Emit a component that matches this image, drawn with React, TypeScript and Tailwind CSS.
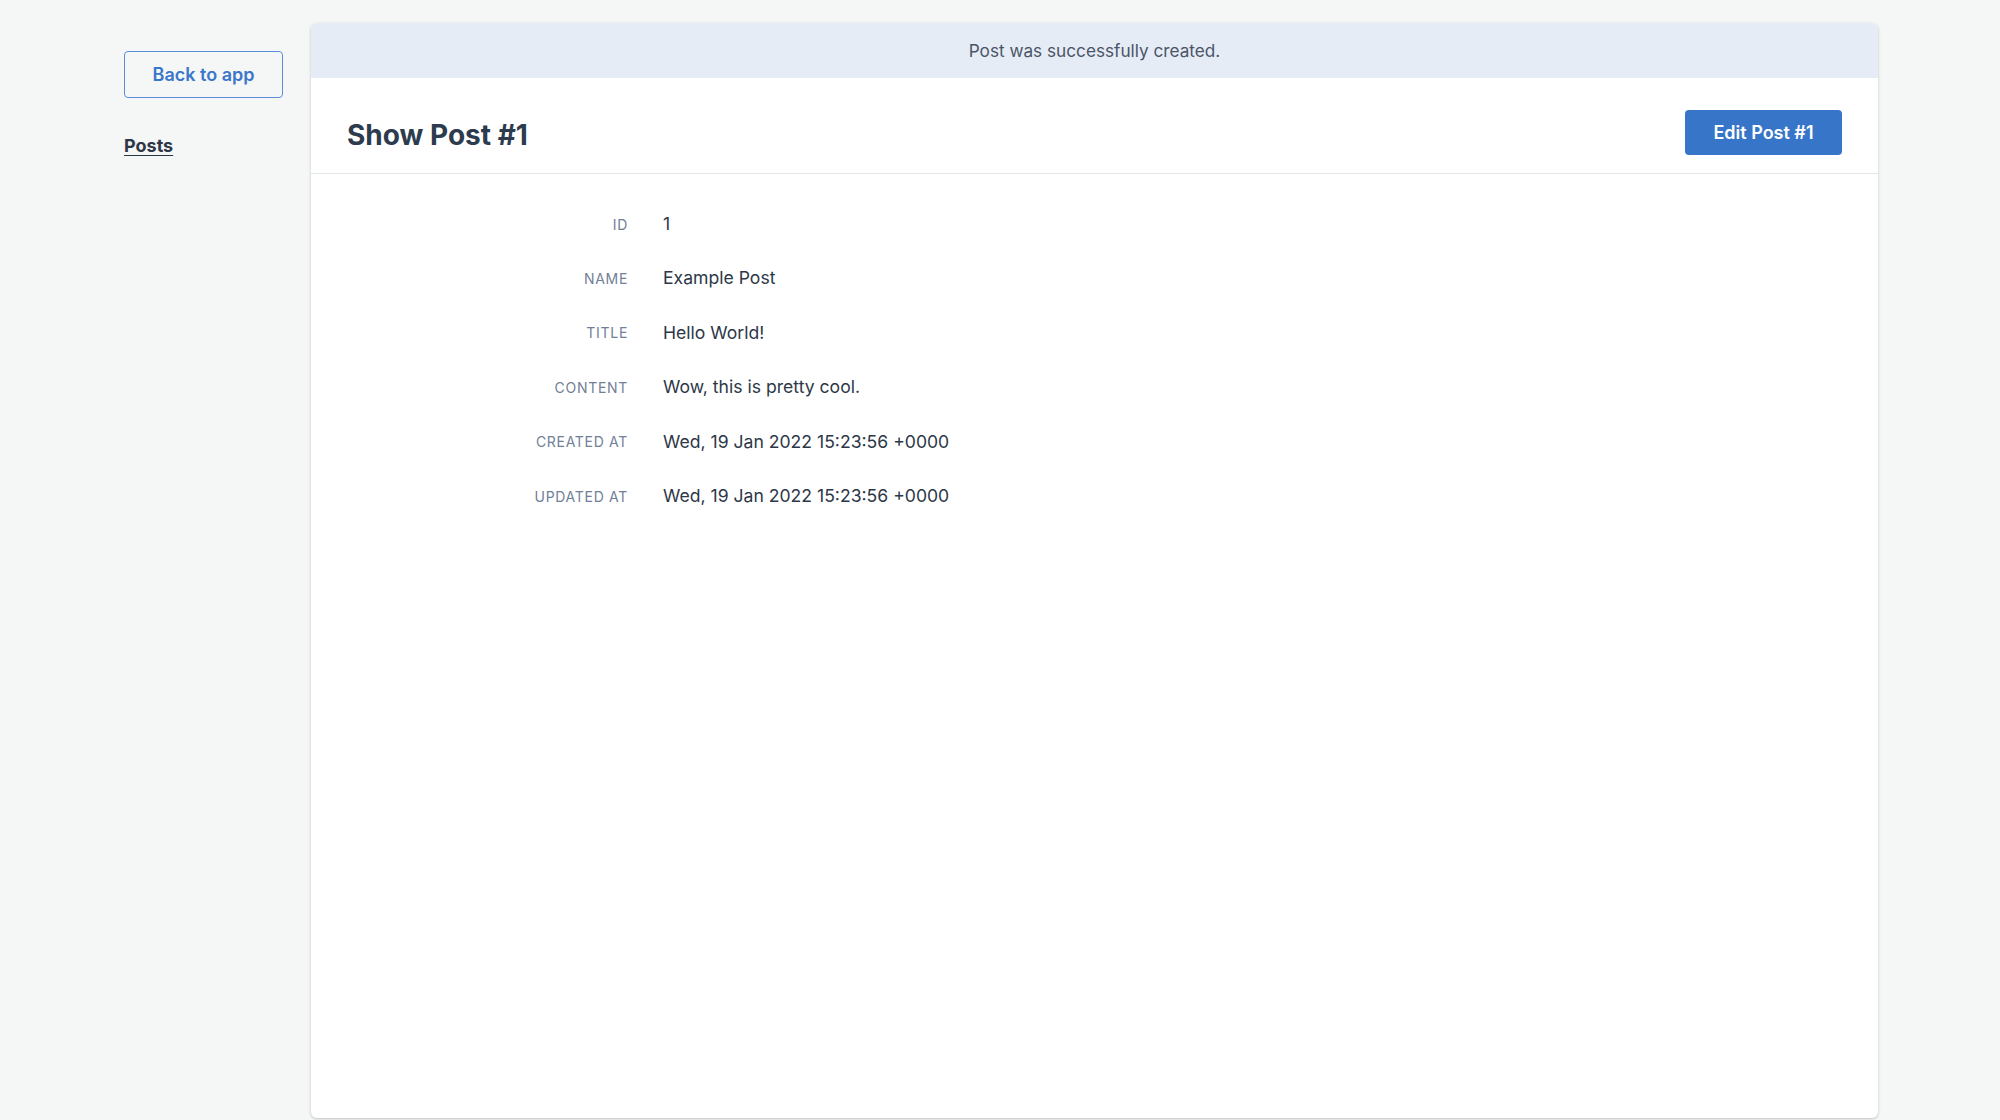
import React from "react";

const fields: { label: string; value: string }[] = [
  { label: "ID", value: "1" },
  { label: "Name", value: "Example Post" },
  { label: "Title", value: "Hello World!" },
  { label: "Content", value: "Wow, this is pretty cool." },
  { label: "Created at", value: "Wed, 19 Jan 2022 15:23:56 +0000" },
  { label: "Updated at", value: "Wed, 19 Jan 2022 15:23:56 +0000" },
];

export default function App() {
  return (
    <div
      className="min-h-screen bg-[#f5f6f6] pl-[124px] pr-[122px] pt-[23px]"
      style={{ fontFamily: "Inter, 'Noto Sans', sans-serif" }}
    >
      <div className="flex gap-[28px]">
        {/* Sidebar */}
        <aside className="w-[159px] shrink-0 pt-[28px]">
          <a
            href="#"
            className="flex h-[47px] w-[159px] items-center justify-center rounded-[4px] border border-[#5a8dd6] text-[18px] font-semibold text-[#3a76c9]"
          >
            Back to app
          </a>
          <nav className="mt-[34px]">
            <a
              href="#"
              className="text-[18px] font-bold text-[#2d3748] underline underline-offset-[3px]"
            >
              Posts
            </a>
          </nav>
        </aside>

        {/* Main card */}
        <main className="flex h-[1095px] flex-1 flex-col overflow-hidden rounded-[6px] bg-white shadow-[0_1px_3px_rgba(0,0,0,0.22)]">
          <div className="flex h-[55px] items-center justify-center bg-[#e6ecf5] text-[17.2px] text-[#4a5568]">
            Post was successfully created.
          </div>

          <header className="flex items-center justify-between border-b border-[#e2e5e9] px-9 pb-[18px] pt-[32px]">
            <h1 className="pt-[4px] text-[28px] font-bold leading-none text-[#2d3b4e]">
              Show Post #1
            </h1>
            <a
              href="#"
              className="flex h-[45px] w-[157px] items-center justify-center rounded-[4px] bg-[#3775c9] text-[18px] font-semibold text-white"
            >
              Edit Post #1
            </a>
          </header>

          <dl className="pt-[23px]">
            {fields.map((f) => (
              <div key={f.label} className="flex h-[54.4px] items-center gap-[35px]">
                <dt className="w-[317px] text-right text-[14px] uppercase tracking-wider text-[#718096]">
                  {f.label}
                </dt>
                <dd className="text-[17.6px] text-[#2d3748]">{f.value}</dd>
              </div>
            ))}
          </dl>
        </main>
      </div>
    </div>
  );
}
